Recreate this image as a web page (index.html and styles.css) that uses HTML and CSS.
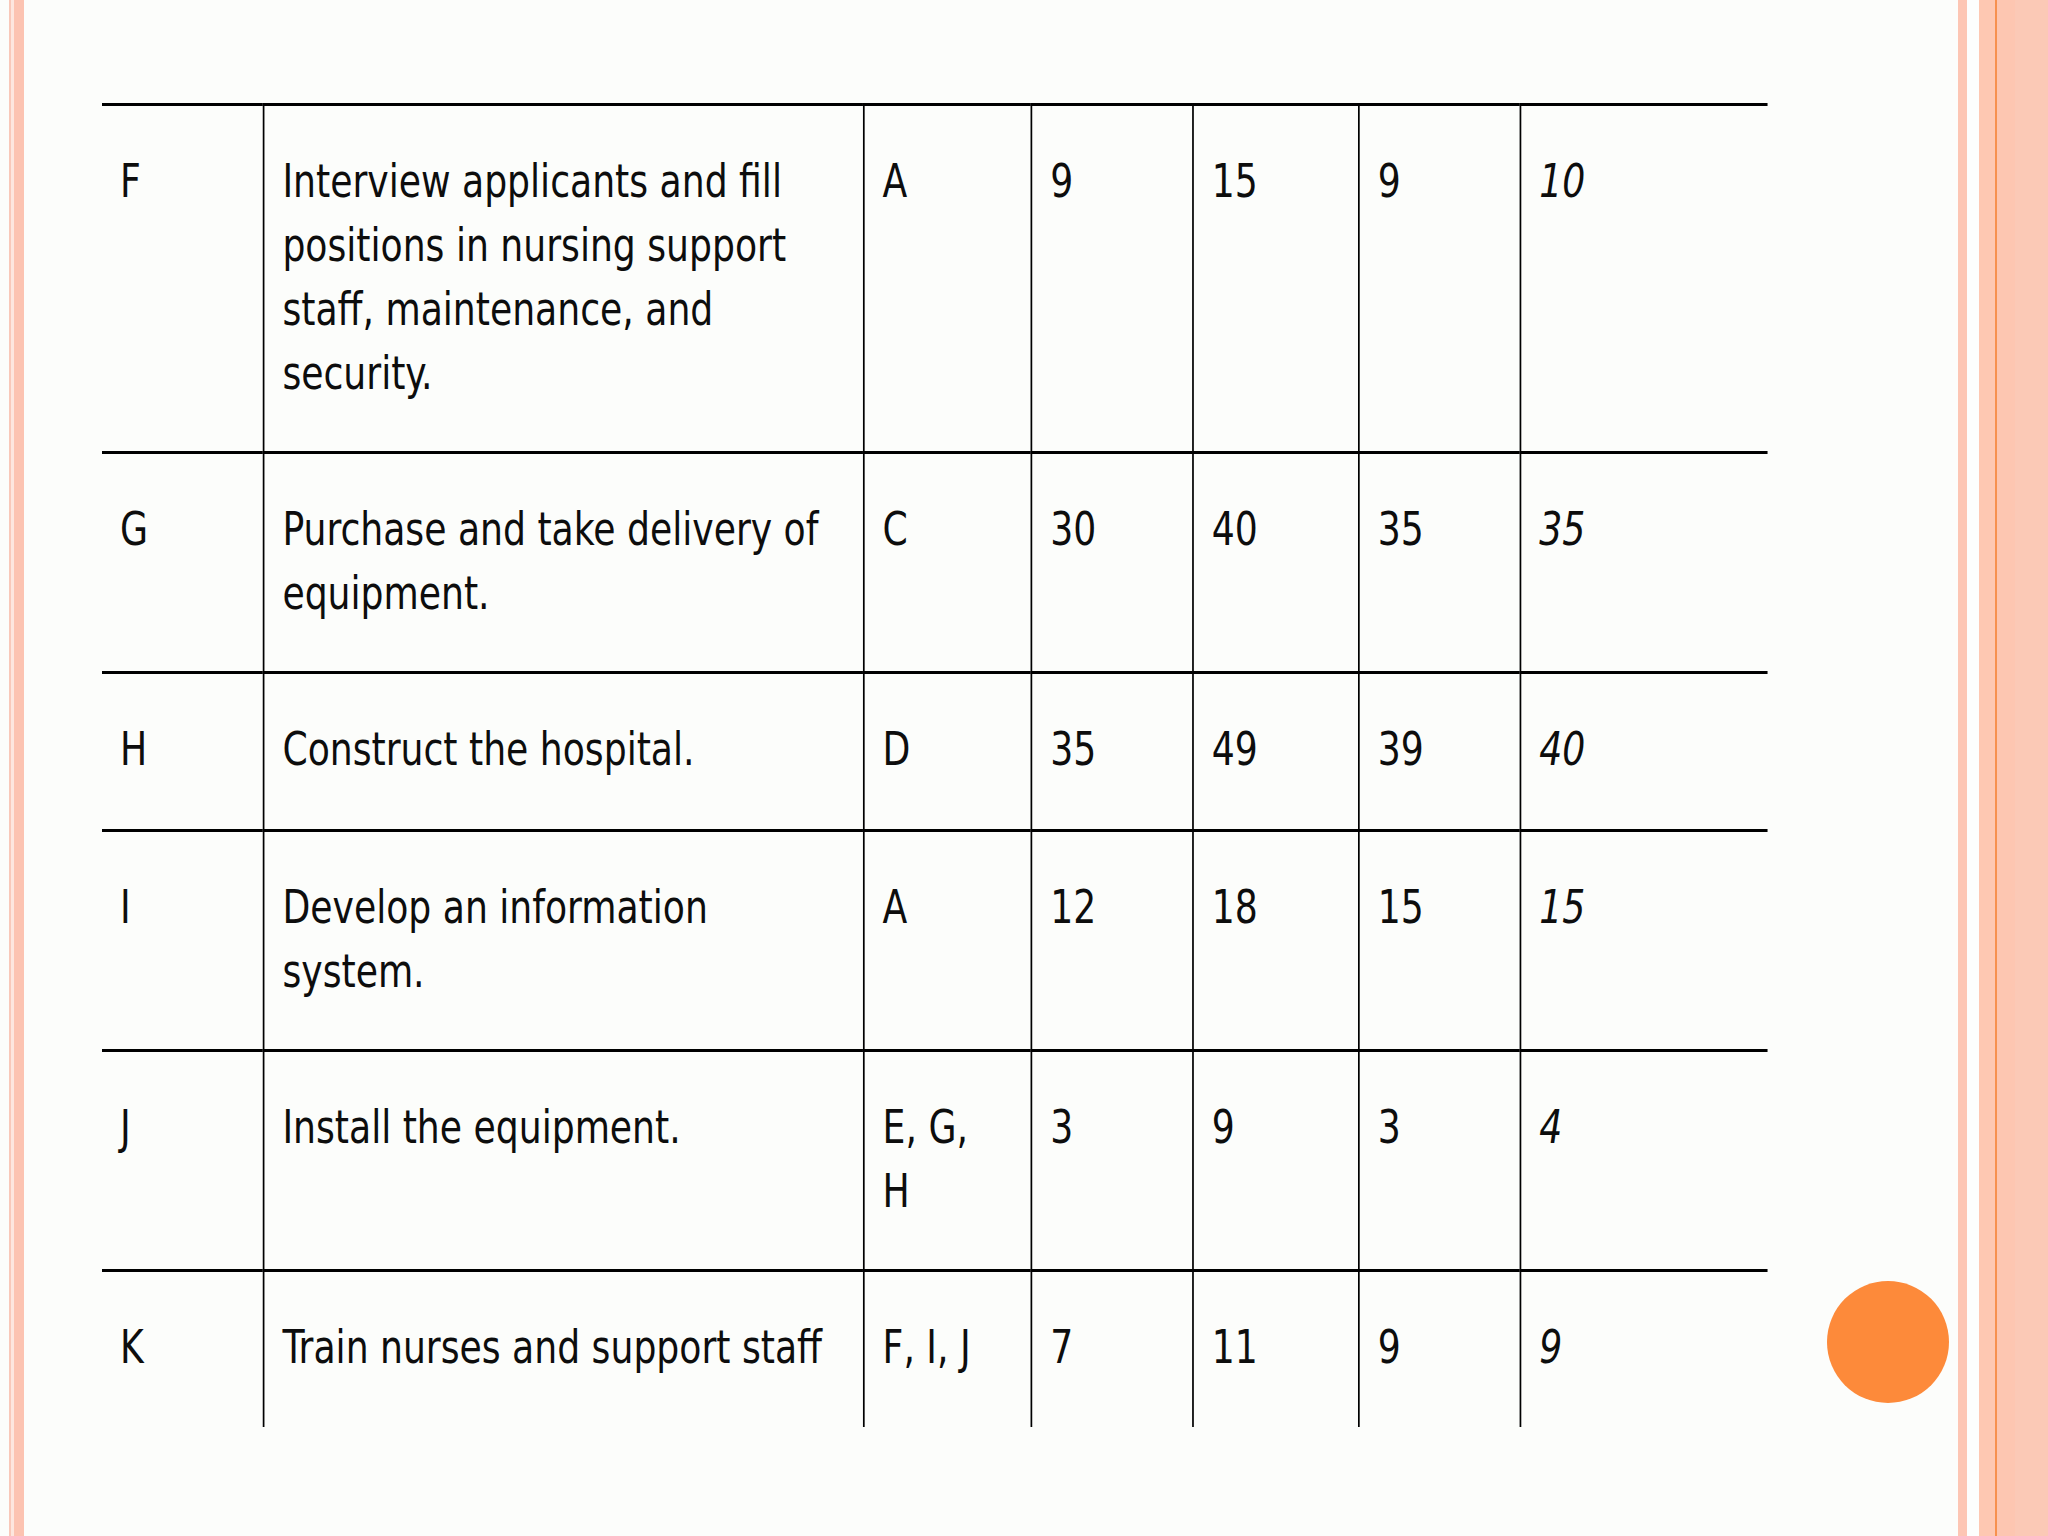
FILE: index.html
```html
<!DOCTYPE html>
<html lang="en">
<head>
<meta charset="utf-8">
<title>Activities</title>
<link rel="stylesheet" href="styles.css">
</head>
<body>
<div class="slide">
  <div class="deco-left"></div>
  <main class="content">
    <table class="grid">
      <colgroup>
        <col class="c1"><col class="c2"><col class="c3"><col class="c4"><col class="c5"><col class="c6"><col class="c7">
      </colgroup>
      <tbody>
        <tr>
          <td>F</td>
          <td class="desc">Interview applicants and fill<br>positions in nursing support<br>staff, maintenance, and<br>security.</td>
          <td>A</td><td>9</td><td>15</td><td>9</td><td class="it">10</td>
        </tr>
        <tr>
          <td>G</td>
          <td class="desc">Purchase and take delivery of<br>equipment.</td>
          <td>C</td><td>30</td><td>40</td><td>35</td><td class="it">35</td>
        </tr>
        <tr class="single">
          <td>H</td>
          <td class="desc">Construct the hospital.</td>
          <td>D</td><td>35</td><td>49</td><td>39</td><td class="it">40</td>
        </tr>
        <tr>
          <td>I</td>
          <td class="desc">Develop an information<br>system.</td>
          <td>A</td><td>12</td><td>18</td><td>15</td><td class="it">15</td>
        </tr>
        <tr>
          <td>J</td>
          <td class="desc">Install the equipment.</td>
          <td>E, G,<br>H</td><td>3</td><td>9</td><td>3</td><td class="it">4</td>
        </tr>
        <tr class="single">
          <td>K</td>
          <td class="desc">Train nurses and support staff</td>
          <td>F, I, J</td><td>7</td><td>11</td><td>9</td><td class="it">9</td>
        </tr>
      </tbody>
    </table>
  </main>
  <div class="deco-right"></div>
  <div class="dot"></div>
</div>
</body>
</html>
```

FILE: styles.css
```css
html, body {
  margin: 0;
  padding: 0;
  width: 2048px;
  height: 1536px;
  overflow: hidden;
  background: #fcfdfb;
}

.slide {
  position: relative;
  display: flex;
  width: 2048px;
  height: 1536px;
}

.deco-left {
  flex: 0 0 24px;
  background: linear-gradient(to right,
    #fcfdfb 0 9px,
    #f9c8b9 9px 11px,
    #fde6de 11px 14px,
    #fcc3b1 14px 24px);
}

.deco-right {
  flex: 0 0 90px;
  background: linear-gradient(to right,
    #fdc6b4 0 9px,
    #fdfefd 9px 21px,
    #fec8b2 21px 37px,
    #f7914f 37px 39px,
    #fdc6b1 39px 57px,
    #fbc9b6 57px 90px);
}

.content {
  flex: 1 1 auto;
  padding: 103px 0 0 78px;
  min-width: 0;
}

.grid {
  width: 1948px;
  table-layout: fixed;
  border-collapse: separate;
  border-spacing: 0;
  transform: scaleX(0.855);
  transform-origin: 0 0;
  font-family: "DejaVu Sans Condensed", "DejaVu Sans", sans-serif;
  font-stretch: condensed;
  font-size: 47px;
  line-height: 64px;
  color: #0d0d0d;
}

.c1 { width: 188px; }
.c2 { width: 702px; }
.c3 { width: 196px; }
.c4 { width: 189px; }
.c5 { width: 194px; }
.c6 { width: 189px; }
.c7 { width: 290px; }

.grid td {
  vertical-align: top;
  padding: 43px 10px 46px 21px;
  border-top: 3px solid #000;
  border-left: 2px solid #000;
  white-space: nowrap;
}

.grid .single td {
  padding-bottom: 48px;
}

.grid td:first-child {
  border-left: none;
}

.grid .it {
  font-style: italic;
}

.dot {
  position: absolute;
  left: 1827px;
  top: 1281px;
  width: 122px;
  height: 122px;
  border-radius: 50%;
  background: #fd8a3a;
}
```
